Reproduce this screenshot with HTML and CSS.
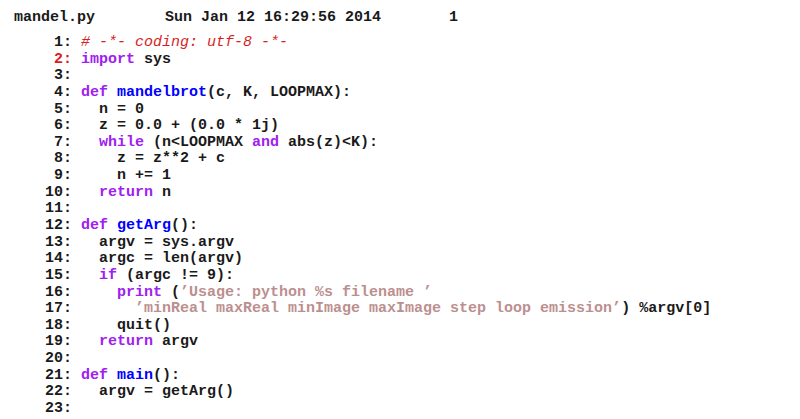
FILE: index.html
```html
<!DOCTYPE html>
<html>
<head>
<meta charset="utf-8">
<link rel="stylesheet" href="styles.css">
</head>
<body>
<div class="page">
  <div class="header">
    <span class="fname">mandel.py</span>
    <span class="date">Sun Jan 12 16:29:56 2014</span>
    <span class="pnum">1</span>
  </div>
<pre class="code"><span class="ln"> 1:</span> <span class="cm"># -*- coding: utf-8 -*-</span>
<span class="ln mark"> 2:</span> <span class="kw">import</span> sys
<span class="ln"> 3:</span>
<span class="ln"> 4:</span> <span class="kw">def</span> <span class="fn">mandelbrot</span>(c, K, LOOPMAX):
<span class="ln"> 5:</span>   n = 0
<span class="ln"> 6:</span>   z = 0.0 + (0.0 * 1j)
<span class="ln"> 7:</span>   <span class="kw">while</span> (n&lt;LOOPMAX <span class="kw">and</span> abs(z)&lt;K):
<span class="ln"> 8:</span>     z = z**2 + c
<span class="ln"> 9:</span>     n += 1
<span class="ln">10:</span>   <span class="kw">return</span> n
<span class="ln">11:</span>
<span class="ln">12:</span> <span class="kw">def</span> <span class="fn">getArg</span>():
<span class="ln">13:</span>   argv = sys.argv
<span class="ln">14:</span>   argc = len(argv)
<span class="ln">15:</span>   <span class="kw">if</span> (argc != 9):
<span class="ln">16:</span>     <span class="kw">print</span> (<span class="st">’Usage: python %s filename ’</span>
<span class="ln">17:</span>       <span class="st">’minReal maxReal minImage maxImage step loop emission’</span>) %argv[0]
<span class="ln">18:</span>     quit()
<span class="ln">19:</span>   <span class="kw">return</span> argv
<span class="ln">20:</span>
<span class="ln">21:</span> <span class="kw">def</span> <span class="fn">main</span>():
<span class="ln">22:</span>   argv = getArg()
<span class="ln">23:</span>
</pre>
</div>
</body>
</html>
```
FILE: styles.css
```css
html, body {
  margin: 0;
  padding: 0;
  background: #ffffff;
}
.page {
  padding: 10px 0 0 14px;
  font-family: "Liberation Mono", "DejaVu Sans Mono", monospace;
  font-size: 15px;
  font-weight: bold;
  color: #1a1a1a;
  line-height: 16.64px;
}
.header {
  display: flex;
  white-space: pre;
  margin-bottom: 8.3px;
}
.date {
  margin-left: 70px;
}
.pnum {
  margin-left: 68px;
}
.code {
  margin: 0 0 0 31px;
  font: inherit;
  line-height: 16.64px;
  white-space: pre;
}
.ln { color: #1a1a1a; }
.ln.mark { color: #e01b1b; }
.cm {
  color: #d61f1f;
  font-style: italic;
  font-weight: normal;
}
.kw { color: #a020f0; }
.fn { color: #0000ff; }
.st { color: #bc8f8f; }
```
